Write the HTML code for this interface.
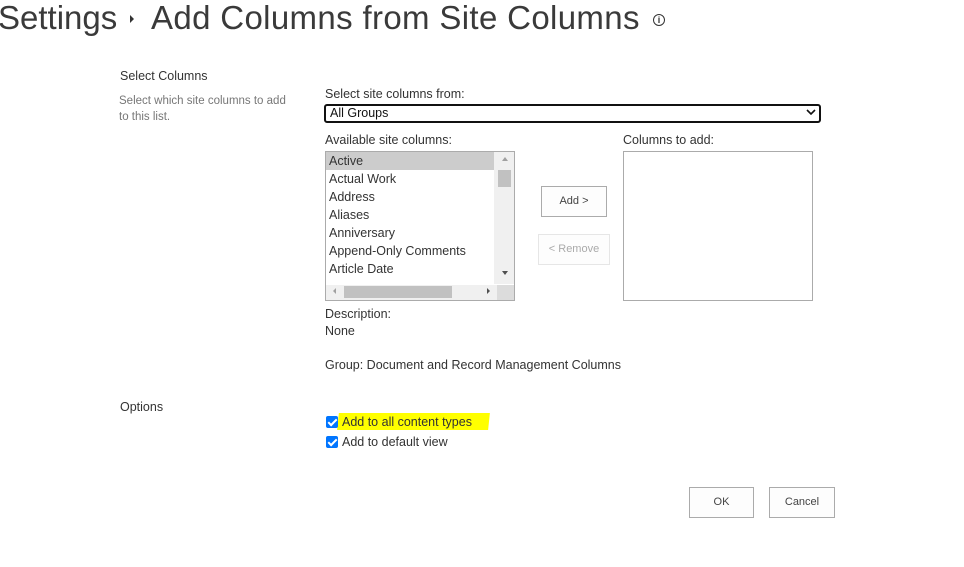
<!DOCTYPE html>
<html><head><style>
body{margin:0;width:964px;height:567px;background:#fff;font-family:"Liberation Sans",sans-serif;color:#444;position:relative;overflow:hidden}
.a{position:absolute;white-space:nowrap}
.t{font-size:33px;color:#3a3a3a;top:-1px}
.s{font-size:12.5px}
.lb{position:absolute;left:325px;top:151px;width:188px;height:148px;border:1px solid #ababab;background:#fff;overflow:hidden}
.lb div{height:18px;line-height:18px;padding-left:3px;font-size:12.5px;color:#333}
.btn{position:absolute;border:1px solid #ababab;background:#fdfdfd;font-size:11px;text-align:center;color:#444}
.cb{position:absolute;width:12px;height:12px;background:#0075ff;border-radius:2px}
.cb:after{content:"";position:absolute;left:3.5px;top:1px;width:3px;height:7px;border:solid #fff;border-width:0 2px 2px 0;transform:rotate(45deg)}
</style></head><body>
<div class="a t" style="left:-2px">Settings</div>
<div class="a" style="left:130px;top:15px;width:0;height:0;border-left:4px solid #333;border-top:4px solid transparent;border-bottom:4px solid transparent"></div>
<div class="a t" style="left:151px;letter-spacing:0.35px">Add Columns from Site Columns</div>
<div class="a" style="left:653px;top:14px;width:10px;height:10px;border:1.3px solid #333;border-radius:50%;font-size:9px;line-height:10px;text-align:center;font-weight:bold;color:#333">i</div>

<div class="a s" style="left:120px;top:69px;color:#333">Select Columns</div>
<div class="a" style="left:119px;top:93px;font-size:11.5px;color:#777;line-height:16px;white-space:normal;width:180px">Select which site columns to add<br>to this list.</div>

<div class="a s" style="left:325px;top:87px;color:#333">Select site columns from:</div>
<div class="a" style="left:324px;top:104px;width:489px;height:15px;border:2px solid #111;border-radius:3px;font-size:12.5px;line-height:15px;padding-left:4px;color:#111">All Groups</div>
<svg class="a" style="left:806px;top:109px" width="10" height="7"><path d="M1 1 L5 5 L9 1" stroke="#111" stroke-width="1.6" fill="none"/></svg>

<div class="a s" style="left:325px;top:133px;color:#333">Available site columns:</div>
<div class="lb">
<div style="background:#ccc;width:168px">Active</div>
<div>Actual Work</div><div>Address</div><div>Aliases</div><div>Anniversary</div><div>Append-Only Comments</div><div>Article Date</div>
<div style="position:absolute;right:0;top:0;width:17px;height:132px;background:#f0f0f0"></div>
<div style="position:absolute;right:3px;top:18px;width:13px;height:17px;background:#c1c1c1;padding:0"></div>
<div style="position:absolute;left:0;bottom:0;width:188px;height:15px;background:#f0f0f0;padding:0"></div>
<div style="position:absolute;left:18px;bottom:2px;width:108px;height:12px;background:#c1c1c1;padding:0"></div>
<div style="position:absolute;right:0;bottom:0;width:17px;height:15px;background:#dcdcdc;padding:0"></div>
</div>
<div class="a" style="left:502px;top:157px;border-left:3px solid transparent;border-right:3px solid transparent;border-bottom:4px solid #a0a0a0"></div>
<div class="a" style="left:502px;top:271px;border-left:3px solid transparent;border-right:3px solid transparent;border-top:4px solid #505050"></div>
<div class="a" style="left:333px;top:288px;border-top:3px solid transparent;border-bottom:3px solid transparent;border-right:3px solid #a0a0a0"></div>
<div class="a" style="left:487px;top:288px;border-top:3px solid transparent;border-bottom:3px solid transparent;border-left:3px solid #505050"></div>

<div class="btn" style="left:541px;top:186px;width:64px;height:29px;line-height:29px">Add &gt;</div>
<div class="btn" style="left:538px;top:234px;width:70px;height:29px;line-height:29px;border-color:#e6e6e6;color:#aaa">&lt; Remove</div>

<div class="a s" style="left:623px;top:133px;color:#333">Columns to add:</div>
<div class="a" style="left:623px;top:151px;width:188px;height:148px;border:1px solid #ababab"></div>

<div class="a s" style="left:325px;top:307px;color:#333">Description:</div>
<div class="a s" style="left:325px;top:324px;color:#333">None</div>
<div class="a s" style="left:325px;top:358px;color:#333">Group: Document and Record Management Columns</div>

<div class="a s" style="left:120px;top:400px;color:#333">Options</div>
<div class="a" style="left:338px;top:413px;width:151px;height:17px;background:#ffff00;transform:skewX(-6deg)"></div>
<div class="cb" style="left:326px;top:416px"></div>
<div class="a s" style="left:342px;top:415px;color:#333">Add to all content types</div>
<div class="cb" style="left:326px;top:436px"></div>
<div class="a s" style="left:342px;top:435px;color:#333">Add to default view</div>

<div class="btn" style="left:689px;top:487px;width:63px;height:29px;line-height:29px">OK</div>
<div class="btn" style="left:769px;top:487px;width:64px;height:29px;line-height:29px">Cancel</div>
</body></html>
